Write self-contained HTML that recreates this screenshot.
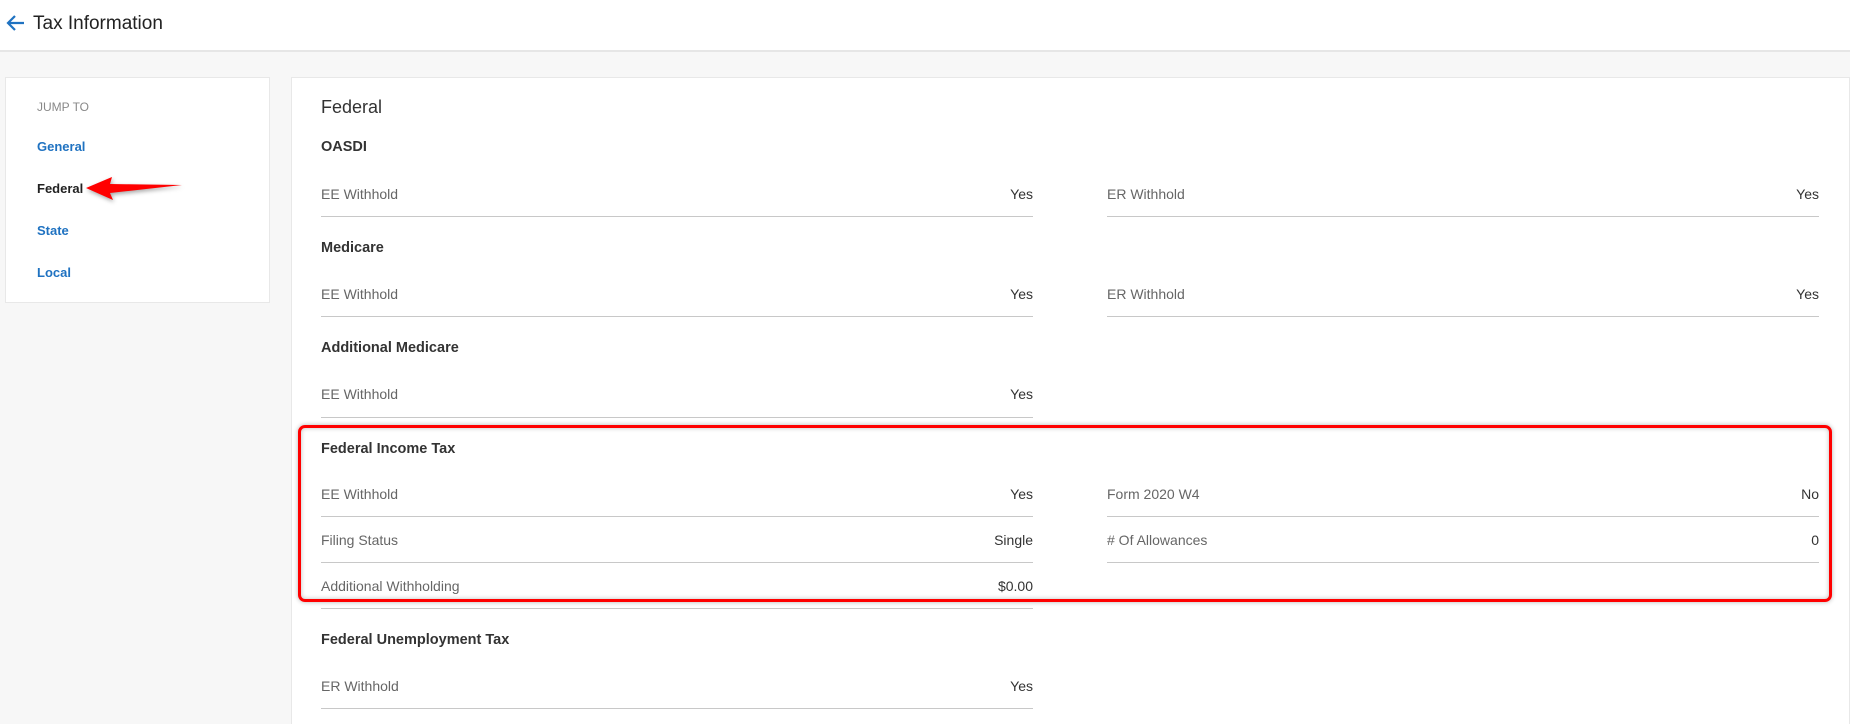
<!DOCTYPE html>
<html style="height:724px;overflow:hidden"><head><meta charset="utf-8"><style>
*{margin:0;padding:0;box-sizing:border-box}
body{width:1850px;height:724px;overflow:hidden;background:#f7f7f7;font-family:"Liberation Sans",sans-serif;position:relative;color:#333}
.hdr{position:absolute;left:0;top:0;width:1850px;height:52px;background:#fff;border-bottom:2px solid #e6e6e6}
.hdr .t{position:absolute;left:33px;top:13px;font-size:19px;color:#222}
.side{position:absolute;left:5px;top:77px;width:265px;height:226px;background:#fff;border:1px solid #e8e8e8}
.side div{position:absolute;left:31px;font-size:13px;font-weight:bold;color:#1f72c1}
.main{position:absolute;left:291px;top:77px;width:1559px;height:647px;background:#fff;border:1px solid #e8e8e8;border-bottom:none}
.a{position:absolute;font-size:14px}
.lbl{color:#666}
.val{color:#333;text-align:right}
.h{position:absolute;left:321px;font-size:14.5px;font-weight:bold;color:#333}
.ln{position:absolute;height:1px;background:#c8c8c8}
</style></head><body>
<div class="hdr">
<svg style="position:absolute;left:6px;top:14px" width="20" height="18" viewBox="0 0 20 18"><path d="M18 9H3M9 2L2 9l7 7" fill="none" stroke="#1f72c1" stroke-width="2.2"/></svg>
<div class="t">Tax Information</div></div>
<div class="side">
<div style="top:22px;font-size:12px;font-weight:normal;color:#888">JUMP TO</div>
<div style="top:61px">General</div>
<div style="top:103px;color:#222">Federal</div>
<div style="top:145px">State</div>
<div style="top:187px">Local</div>
</div>
<svg style="position:absolute;left:80px;top:172px" width="110" height="34"><polygon points="6,16 32,5 30,12 102,13 30,21 33,28" fill="#f00" style="filter:drop-shadow(1px 2px 2px rgba(0,0,0,.35))"/></svg>
<div class="main"></div>
<div class="a" style="left:321px;top:97px;font-size:18px;color:#333">Federal</div>
<div class="h" style="top:139px">OASDI</div>
<div class="h" style="top:240px">Medicare</div>
<div class="h" style="top:340px">Additional Medicare</div>
<div class="h" style="top:441px">Federal Income Tax</div>
<div class="h" style="top:632px">Federal Unemployment Tax</div>

<div class="a lbl" style="left:321px;top:186px">EE Withhold</div><div class="a val" style="left:933px;width:100px;top:186px">Yes</div><div class="ln" style="left:321px;width:712px;top:216px"></div>
<div class="a lbl" style="left:1107px;top:186px">ER Withhold</div><div class="a val" style="left:1719px;width:100px;top:186px">Yes</div><div class="ln" style="left:1107px;width:712px;top:216px"></div>

<div class="a lbl" style="left:321px;top:286px">EE Withhold</div><div class="a val" style="left:933px;width:100px;top:286px">Yes</div><div class="ln" style="left:321px;width:712px;top:316px"></div>
<div class="a lbl" style="left:1107px;top:286px">ER Withhold</div><div class="a val" style="left:1719px;width:100px;top:286px">Yes</div><div class="ln" style="left:1107px;width:712px;top:316px"></div>

<div class="a lbl" style="left:321px;top:386px">EE Withhold</div><div class="a val" style="left:933px;width:100px;top:386px">Yes</div><div class="ln" style="left:321px;width:712px;top:417px"></div>

<div class="a lbl" style="left:321px;top:486px">EE Withhold</div><div class="a val" style="left:933px;width:100px;top:486px">Yes</div><div class="ln" style="left:321px;width:712px;top:516px"></div>
<div class="a lbl" style="left:1107px;top:486px">Form 2020 W4</div><div class="a val" style="left:1719px;width:100px;top:486px">No</div><div class="ln" style="left:1107px;width:712px;top:516px"></div>
<div class="a lbl" style="left:321px;top:532px">Filing Status</div><div class="a val" style="left:933px;width:100px;top:532px">Single</div><div class="ln" style="left:321px;width:712px;top:562px"></div>
<div class="a lbl" style="left:1107px;top:532px"># Of Allowances</div><div class="a val" style="left:1719px;width:100px;top:532px">0</div><div class="ln" style="left:1107px;width:712px;top:562px"></div>
<div class="a lbl" style="left:321px;top:578px">Additional Withholding</div><div class="a val" style="left:933px;width:100px;top:578px">$0.00</div><div class="ln" style="left:321px;width:712px;top:608px"></div>

<div class="a lbl" style="left:321px;top:678px">ER Withhold</div><div class="a val" style="left:933px;width:100px;top:678px">Yes</div><div class="ln" style="left:321px;width:712px;top:708px"></div>

<div style="position:absolute;left:298px;top:425px;width:1534px;height:177px;border:3px solid #f00;border-radius:7px;box-shadow:0 0 5px rgba(0,0,0,.3),inset 0 0 5px rgba(0,0,0,.25)"></div>
</body></html>
